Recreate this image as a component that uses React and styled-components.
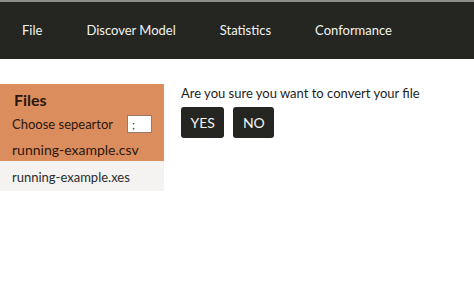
import styled, { createGlobalStyle } from "styled-components";

const GlobalStyle = createGlobalStyle`
  body {
    margin: 0;
    background: #fff;
    font-family: Lato, "Open Sans", sans-serif;
  }
`;

const navItems = ["File", "Discover Model", "Statistics", "Conformance"];

const App = () => {
  return (
    <Page>
      <GlobalStyle />
      <TopStrip />
      <NavBar>
        {navItems.map((item) => (
          <NavItem key={item}>{item}</NavItem>
        ))}
      </NavBar>
      <Content>
        <Sidebar>
          <FilesPanel>
            <PanelTitle>Files</PanelTitle>
            <SeparatorRow>
              Choose sepeartor
              <SeparatorInput defaultValue=";" />
            </SeparatorRow>
            <FileRow selected>running-example.csv</FileRow>
          </FilesPanel>
          <FileRow>running-example.xes</FileRow>
        </Sidebar>
        <Main>
          <Question>Are you sure you want to convert your file</Question>
          <Buttons>
            <DarkButton>YES</DarkButton>
            <DarkButton>NO</DarkButton>
          </Buttons>
        </Main>
      </Content>
    </Page>
  );
};

export default App;

const Page = styled.div`
  width: 474px;
  min-height: 283px;
`;

const TopStrip = styled.div`
  height: 2px;
  background: #8d8d8b;
`;

const NavBar = styled.nav`
  display: flex;
  align-items: center;
  height: 57px;
  background: #252622;
`;

const NavItem = styled.div`
  padding: 0 22px;
  color: #f2f2ef;
  font-size: 13px;
  padding-bottom: 1px;
  white-space: nowrap;
`;

const Content = styled.div`
  display: flex;
  margin-top: 25px;
`;

const Sidebar = styled.div`
  width: 164px;
  flex-shrink: 0;
`;

const FilesPanel = styled.div`
  background: #dc8d5e;
  padding: 5px 0 0;
  color: #2a170e;
`;

const PanelTitle = styled.div`
  padding: 0 14px;
  font-size: 16px;
  font-weight: 700;
  line-height: 22px;
`;

const SeparatorRow = styled.div`
  display: flex;
  align-items: center;
  height: 26px;
  padding: 0 12px;
  font-size: 13px;
  white-space: nowrap;
`;

const SeparatorInput = styled.input`
  box-sizing: border-box;
  flex-shrink: 0;
  width: 25px;
  height: 18px;
  margin-left: 14px;
  padding: 0 4px;
  border: 1px solid #9a7a66;
  background: #fff;
  font-family: Lato, sans-serif;
  font-size: 11px;
  color: #222;
`;

const FileRow = styled.div`
  display: flex;
  align-items: center;
  height: ${(p) => (p.selected ? "24px" : "29px")};
  padding: 0 12px;
  padding-top: ${(p) => (p.selected ? "0" : "1px")};
  font-size: ${(p) => (p.selected ? "14px" : "13px")};
  white-space: nowrap;
  color: ${(p) => (p.selected ? "#2a170e" : "#2b2b2b")};
  background: ${(p) => (p.selected ? "transparent" : "#f4f3f1")};
`;

const Main = styled.div`
  margin-left: 17px;
`;

const Question = styled.div`
  font-size: 13px;
  line-height: 18px;
  color: #1e1e1e;
`;

const Buttons = styled.div`
  display: flex;
  gap: 9px;
  margin-top: 5px;
`;

const DarkButton = styled.button`
  height: 31px;
  padding: 0 9.5px;
  border: none;
  border-radius: 3px;
  background: #252622;
  color: #f4f4f1;
  font-family: Lato, sans-serif;
  font-size: 14px;
`;
